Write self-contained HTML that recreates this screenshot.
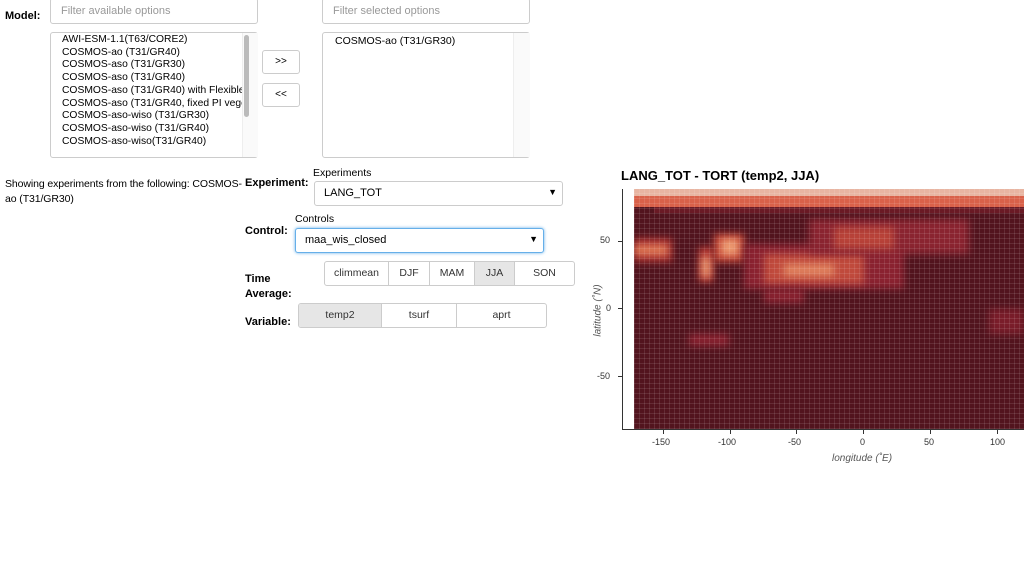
<!DOCTYPE html>
<html><head><style>
body{margin:0;width:1024px;height:567px;background:#fff;font-family:"Liberation Sans",Arial,sans-serif;font-size:11px;color:#000;position:relative;overflow:hidden}
.a{position:absolute}
.lbl{font-weight:bold;font-size:11px}
.inp{border:1px solid #ccc;border-radius:3px;background:#fff;box-sizing:border-box}
.ph{color:#999;font-size:11px}
.btn{border:1px solid #ccc;border-radius:3px;background:#fff;box-sizing:border-box;text-align:center;font-size:10px}
.seg{display:flex;border:1px solid #ccc;border-radius:3px;box-sizing:border-box;overflow:hidden}
.seg div{border-right:1px solid #ccc;text-align:center;font-size:10.5px;line-height:23px;color:#333}
.seg div:last-child{border-right:none}
.on{background:#e6e6e6}
.blob{position:absolute;filter:blur(4px)}
.t{position:absolute;background:#333}
</style></head><body>
<div class="a lbl" style="left:5px;top:10px">Model:</div>
<div class="a inp" style="left:50px;top:-2px;width:208px;height:26px"><span class="a ph" style="left:10px;top:6px">Filter available options</span></div>
<div class="a inp" style="left:322px;top:-2px;width:208px;height:26px"><span class="a ph" style="left:10px;top:6px">Filter selected options</span></div>
<div class="a inp" style="left:50px;top:32px;width:208px;height:126px;line-height:12.7px;padding:1px 0 0 11px;font-size:10.3px;white-space:nowrap;overflow:hidden">AWI-ESM-1.1(T63/CORE2)<br>COSMOS-ao (T31/GR40)<br>COSMOS-aso (T31/GR30)<br>COSMOS-aso (T31/GR40)<br>COSMOS-aso (T31/GR40) with Flexible<br>COSMOS-aso (T31/GR40, fixed PI vege<br>COSMOS-aso-wiso (T31/GR30)<br>COSMOS-aso-wiso (T31/GR40)<br>COSMOS-aso-wiso(T31/GR40)</div>
<div class="a" style="left:242px;top:33px;width:15px;height:124px;background:#fafafa;border-left:1px solid #eee"></div>
<div class="a" style="left:244px;top:35px;width:5px;height:82px;background:#bbb;border-radius:3px"></div>
<div class="a inp" style="left:322px;top:32px;width:208px;height:126px;padding:2px 0 0 12px;font-size:10.5px">COSMOS-ao (T31/GR30)</div>
<div class="a" style="left:513px;top:33px;width:16px;height:124px;background:#fafafa;border-left:1px solid #eee"></div>
<div class="a btn" style="left:262px;top:50px;width:38px;height:24px;line-height:22px">&gt;&gt;</div>
<div class="a btn" style="left:262px;top:83px;width:38px;height:24px;line-height:22px">&lt;&lt;</div>

<div class="a" style="left:5px;top:177px;width:250px;line-height:15px;font-size:10.5px;letter-spacing:-0.1px">Showing experiments from the following: COSMOS-<br>ao (T31/GR30)</div>
<div class="a lbl" style="left:245px;top:177px;background:#fff;padding-left:3px;margin-left:-3px">Experiment:</div>
<div class="a" style="left:313px;top:167px;font-size:10.5px">Experiments</div>
<div class="a inp" style="left:314px;top:181px;width:249px;height:25px;padding:5px 9px;font-size:11px">LANG_TOT<span class="a" style="right:5px;top:5px;font-size:9px">▼</span></div>
<div class="a lbl" style="left:245px;top:225px">Control:</div>
<div class="a" style="left:295px;top:213px;font-size:10.5px">Controls</div>
<div class="a inp" style="left:295px;top:228px;width:249px;height:25px;padding:5px 9px;font-size:11px;border-color:#66afe9;box-shadow:0 0 3px #66afe9">maa_wis_closed<span class="a" style="right:5px;top:5px;font-size:9px">▼</span></div>
<div class="a lbl" style="left:245px;top:272px;line-height:15px">Time<br>Average:</div>
<div class="a seg" style="left:324px;top:261px;width:251px;height:25px"><div style="width:63px">climmean</div><div style="width:40px">DJF</div><div style="width:44px">MAM</div><div class="on" style="width:39px">JJA</div><div style="flex:1">SON</div></div>
<div class="a lbl" style="left:245px;top:316px">Variable:</div>
<div class="a seg" style="left:298px;top:303px;width:249px;height:25px"><div class="on" style="width:82px">temp2</div><div style="width:74px">tsurf</div><div style="flex:1">aprt</div></div>

<div class="a" style="left:621px;top:168px;font-size:13px;font-weight:bold">LANG_TOT - TORT (temp2, JJA)</div>
<div class="a" style="left:634px;top:189px;width:390px;height:240px;background:#52141e;overflow:hidden">
 <div class="a" style="left:0;top:0;width:390px;height:7px;background:#e8b5a2"></div>
 <div class="a" style="left:0;top:7px;width:390px;height:11px;background:#d9614a"></div>
 <div class="a" style="left:20px;top:18px;width:370px;height:6px;background:#6a1a25"></div>
 <div class="blob" style="left:0;top:49px;width:38px;height:24px;background:#a8302f"></div>
 <div class="blob" style="left:0;top:56px;width:34px;height:10px;background:#e07a55"></div>
 <div class="blob" style="left:65px;top:58px;width:14px;height:35px;background:#b83a34"></div>
 <div class="blob" style="left:68px;top:68px;width:8px;height:20px;background:#eb9a70"></div>
 <div class="blob" style="left:80px;top:45px;width:30px;height:28px;background:#c54536"></div>
 <div class="blob" style="left:87px;top:50px;width:18px;height:16px;background:#ec9a70"></div>
 <div class="blob" style="left:110px;top:55px;width:160px;height:45px;background:#8a2230"></div>
 <div class="blob" style="left:130px;top:65px;width:100px;height:30px;background:#c04a3c"></div>
 <div class="blob" style="left:150px;top:75px;width:50px;height:12px;background:#e0825e"></div>
 <div class="blob" style="left:130px;top:100px;width:40px;height:14px;background:#8a2230"></div>
 <div class="blob" style="left:175px;top:30px;width:160px;height:35px;background:#8a2430"></div>
 <div class="blob" style="left:200px;top:38px;width:60px;height:22px;background:#b84238"></div>
 <div class="blob" style="left:355px;top:120px;width:35px;height:25px;background:#7a1d2a"></div>
 <div class="blob" style="left:55px;top:145px;width:40px;height:12px;background:#8a2230"></div>
 <div class="a" style="inset:0;background:repeating-linear-gradient(90deg,rgba(255,255,255,.1) 0 1px,transparent 1px 5px),repeating-linear-gradient(0deg,rgba(255,255,255,.1) 0 1px,transparent 1px 5px)"></div>
</div>
<div class="a" style="left:622px;top:189px;width:1px;height:240px;background:#333"></div>
<div class="a" style="left:622px;top:429px;width:402px;height:1px;background:#333"></div>
<div class="t" style="left:618px;top:241px;width:4px;height:1px"></div>
<div class="t" style="left:618px;top:308px;width:4px;height:1px"></div>
<div class="t" style="left:618px;top:376px;width:4px;height:1px"></div>
<div class="t" style="left:663px;top:430px;width:1px;height:4px"></div>
<div class="t" style="left:730px;top:430px;width:1px;height:4px"></div>
<div class="t" style="left:796px;top:430px;width:1px;height:4px"></div>
<div class="t" style="left:863px;top:430px;width:1px;height:4px"></div>
<div class="t" style="left:930px;top:430px;width:1px;height:4px"></div>
<div class="t" style="left:997px;top:430px;width:1px;height:4px"></div>
<div class="a" style="left:600px;top:235px;font-size:9px;color:#333">50</div>
<div class="a" style="left:606px;top:303px;font-size:9px;color:#333">0</div>
<div class="a" style="left:597px;top:371px;font-size:9px;color:#333">-50</div>
<div class="a" style="left:563px;top:305px;font-size:10px;color:#555;font-style:italic;transform:rotate(-90deg);width:70px;text-align:center">latitude (˚N)</div>
<div class="a" style="left:652px;top:437px;font-size:9px;color:#333">-150</div>
<div class="a" style="left:718px;top:437px;font-size:9px;color:#333">-100</div>
<div class="a" style="left:788px;top:437px;font-size:9px;color:#333">-50</div>
<div class="a" style="left:860px;top:437px;font-size:9px;color:#333">0</div>
<div class="a" style="left:924px;top:437px;font-size:9px;color:#333">50</div>
<div class="a" style="left:990px;top:437px;font-size:9px;color:#333">100</div>
<div class="a" style="left:832px;top:453px;font-size:10px;color:#555;font-style:italic">longitude (˚E)</div>
</body></html>
